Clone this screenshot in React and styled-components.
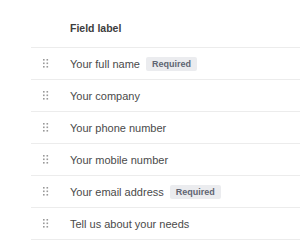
import React from "react"
import styled, { createGlobalStyle } from "styled-components"

const GlobalStyle = createGlobalStyle`
	body {
		margin: 0;
		background: #fff;
		font-family: "Liberation Sans", Arial, sans-serif;
	}
`

const Table = styled.div`
	padding: 22px 0 0 31px;
`
const HeaderRow = styled.div`
	display: flex;
	align-items: flex-start;
	height: 25px;
	padding-left: 39px;
	border-bottom: 1px solid #ececec;
	font-size: 10.5px;
	font-weight: 700;
	color: #3d3d3d;
`
const Row = styled.div`
	display: flex;
	align-items: center;
	height: 31px;
	border-bottom: 1px solid #ececec;
`
const Handle = styled.div`
	width: 39px;
	display: flex;
	justify-content: center;
	color: #9a9a9a;
	padding-right: 10px;
	box-sizing: border-box;
`
const Label = styled.span`
	font-size: 11px;
	color: #4a4a4a;
`
const Badge = styled.span`
	margin-left: 6px;
	background: #ebecef;
	color: #5f6572;
	font-size: 9px;
	font-weight: 700;
	height: 14px;
	display: inline-flex;
	align-items: center;
	padding: 0 6px;
	border-radius: 2px;
`

const Dots = () => (
	<svg width="6" height="9" viewBox="0 0 6 9">
		{[0, 1, 2].map((r) =>
			[0, 1].map((c) => <rect key={`${r}${c}`} x={c * 3.5} y={r * 3.5} width="1.6" height="1.6" fill="currentColor" />)
		)}
	</svg>
)

const fields = [
	{ label: "Your full name", required: true },
	{ label: "Your company" },
	{ label: "Your phone number" },
	{ label: "Your mobile number" },
	{ label: "Your email address", required: true },
	{ label: "Tell us about your needs" },
]

const App = () => {
	return (
		<>
			<GlobalStyle />
			<Table>
				<HeaderRow>Field label</HeaderRow>
				{fields.map((f) => (
					<Row key={f.label}>
						<Handle>
							<Dots />
						</Handle>
						<Label>{f.label}</Label>
						{f.required && <Badge>Required</Badge>}
					</Row>
				))}
			</Table>
		</>
	)
}

export default App
